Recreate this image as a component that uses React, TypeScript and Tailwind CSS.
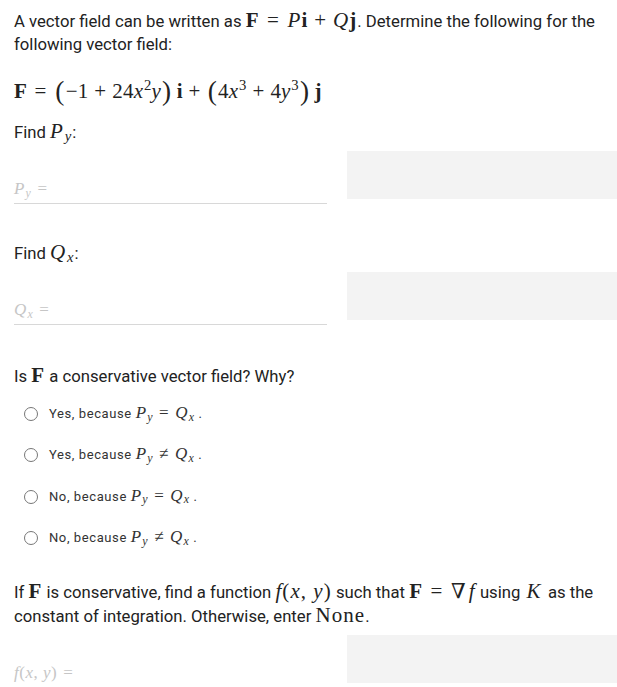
import type { ReactNode } from 'react';

const serif = "font-['Liberation_Serif','DejaVu_Serif',serif]";

// italic math variable
function V({ children }: { children: ReactNode }) {
  return <span className={`${serif} italic`}>{children}</span>;
}

// bold upright vector symbol
function B({ children }: { children: ReactNode }) {
  return <span className={`${serif} font-bold`}>{children}</span>;
}

// upright math (numbers, brackets, words)
function R({ children }: { children: ReactNode }) {
  return <span className={serif}>{children}</span>;
}

// relation (=, ≠) gets the wider spacing, binary (+) a bit less
function Rel({ children }: { children: ReactNode }) {
  return <span className={`${serif} mx-[0.36em]`}>{children}</span>;
}

function Bin({ children }: { children: ReactNode }) {
  return <span className={`${serif} mx-[0.28em]`}>{children}</span>;
}

function Sub({ children }: { children: ReactNode }) {
  return (
    <span className={`${serif} italic text-[0.7em] leading-[0px] align-[-0.22em] ml-[0.05em]`}>
      {children}
    </span>
  );
}

function Sup({ children }: { children: ReactNode }) {
  return (
    <span className={`${serif} text-[0.7em] leading-[0px] align-[0.55em] ml-[0.05em]`}>
      {children}
    </span>
  );
}

function Big({ children }: { children: ReactNode }) {
  return (
    <span className={`${serif} text-[1.3em] leading-[0px] align-[-0.06em] mx-[0.04em] font-light`}>
      {children}
    </span>
  );
}

// inline math; zero line-height so it never stretches the text line
function Math({ children }: { children: ReactNode }) {
  return (
    <span className="text-[21px] leading-[0px] tracking-[0.05em] whitespace-nowrap">
      {children}
    </span>
  );
}

function AnswerRow({ placeholder }: { placeholder: ReactNode }) {
  return (
    <div className="flex items-start gap-[20px]">
      <div className="flex h-[53px] w-[313px] items-end border-b border-[#d8d8d8] pb-[4px] text-[17px] leading-[20px] tracking-[0.03em] text-[#c6c6c6]">
        <span>{placeholder}</span>
      </div>
      <div className="h-[48px] flex-1 bg-[#f3f3f3]" />
    </div>
  );
}

function Radio({ children }: { children: ReactNode }) {
  return (
    <label className="flex h-[41.3px] items-center gap-[11px] pl-[10px] text-[13px] leading-[20px] tracking-[0.6px] text-[#333]">
      <span className="h-[14px] w-[14px] shrink-0 rounded-full border-[1.5px] border-[#777] bg-white" />
      <span>{children}</span>
    </label>
  );
}

function PneqQ({ neq }: { neq?: boolean }) {
  return (
    <span className="mr-[4px] text-[17px] leading-[0px] tracking-[0.03em]">
      <V>P</V>
      <Sub>y</Sub>
      <Rel>{neq ? '≠' : '='}</Rel>
      <V>Q</V>
      <Sub>x</Sub>
    </span>
  );
}

export default function App() {
  return (
    <div className="min-h-screen bg-white pl-[14px] pt-[11px] font-['Roboto',sans-serif] text-[16.7px] leading-[22.5px] text-[#222]">
      <p className="pr-[12px]">
        A vector field can be written as{' '}
        <Math>
          <B>F</B>
          <Rel>=</Rel>
          <V>P</V>
          <B>i</B>
          <Bin>+</Bin>
          <V>Q</V>
          <B>j</B>
        </Math>
        . Determine the following for the following vector field:
      </p>

      <div className="mt-[20px] h-[30px] text-[21px] leading-[30px] tracking-[0.01em] whitespace-nowrap">
        <B>F</B>
        <Rel>=</Rel>
        <Big>(</Big>
        <R>−1</R>
        <Bin>+</Bin>
        <R>24</R>
        <V>x</V>
        <Sup>2</Sup>
        <V>y</V>
        <Big>)</Big>
        <span className="ml-[0.2em]" />
        <B>i</B>
        <Bin>+</Bin>
        <Big>(</Big>
        <R>4</R>
        <V>x</V>
        <Sup>3</Sup>
        <Bin>+</Bin>
        <R>4</R>
        <V>y</V>
        <Sup>3</Sup>
        <Big>)</Big>
        <span className="ml-[0.2em]" />
        <B>j</B>
      </div>

      <p className="mt-[16px]">
        Find{' '}
        <Math>
          <V>P</V>
          <Sub>y</Sub>
        </Math>
        :
      </p>
      <div className="mt-[6.5px]">
        <AnswerRow
          placeholder={
            <>
              <V>P</V>
              <Sub>y</Sub>
              <Rel>=</Rel>
            </>
          }
        />
      </div>

      <p className="mt-[39px]">
        Find{' '}
        <Math>
          <V>Q</V>
          <Sub>x</Sub>
        </Math>
        :
      </p>
      <div className="mt-[6.5px]">
        <AnswerRow
          placeholder={
            <>
              <V>Q</V>
              <Sub>x</Sub>
              <Rel>=</Rel>
            </>
          }
        />
      </div>

      <p className="mt-[41px]">
        Is{' '}
        <Math>
          <B>F</B>
        </Math>{' '}
        a conservative vector field? Why?
      </p>
      <div className="mt-[5px]">
        <Radio>
          Yes, because <PneqQ />.
        </Radio>
        <Radio>
          Yes, because <PneqQ neq />.
        </Radio>
        <Radio>
          No, because <PneqQ />.
        </Radio>
        <Radio>
          No, because <PneqQ neq />.
        </Radio>
      </div>

      <p className="mt-[22px] pr-[12px] leading-[24.5px]">
        If{' '}
        <Math>
          <B>F</B>
        </Math>{' '}
        is conservative, find a function{' '}
        <Math>
          <V>f</V>
          <R>(</R>
          <V>x</V>
          <R>, </R>
          <V>y</V>
          <R>)</R>
        </Math>{' '}
        such that{' '}
        <Math>
          <B>F</B>
          <Rel>=</Rel>
          <R>∇</R>
          <span className="ml-[0.1em]" />
          <V>f</V>
        </Math>{' '}
        using{' '}
        <Math>
          <span className="mx-[0.1em]">
            <V>K</V>
          </span>
        </Math>{' '}
        as the constant of integration. Otherwise, enter{' '}
        <Math>
          <R>None</R>
        </Math>
        .
      </p>
      <div className="mt-[5px]">
        <AnswerRow
          placeholder={
            <>
              <V>f</V>
              <R>(</R>
              <V>x</V>
              <R>, </R>
              <V>y</V>
              <R>)</R>
              <Rel>=</Rel>
            </>
          }
        />
      </div>
    </div>
  );
}
